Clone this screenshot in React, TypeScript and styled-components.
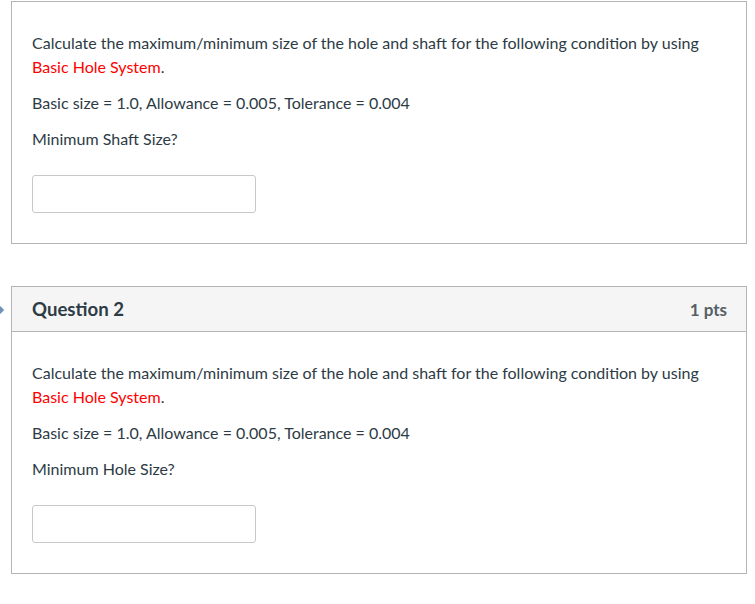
import React from "react";
import styled, { createGlobalStyle } from "styled-components";

const Global = createGlobalStyle`
  html, body { margin: 0; padding: 0; background: #fff; }
  body { font-family: Lato, "Noto Sans", "Liberation Sans", sans-serif; color: #2d3b45; }
`;

const Page = styled.div`
  position: relative;
  width: 755px;
  padding: 1px 0 0 11px;
  box-sizing: border-box;
  display: flex;
  flex-direction: column;
  gap: 42px;
`;

const Card = styled.section`
  position: relative;
  width: 736px;
  box-sizing: border-box;
  border: 1px solid #b5b5b5;
  background: #fff;
`;

const Header = styled.header`
  height: 44px;
  display: flex;
  align-items: center;
  justify-content: space-between;
  padding: 0 19px 0 20px;
  background: #f5f5f5;
  border-bottom: 1px solid #b5b5b5;
`;

const Title = styled.h2`
  margin: 0;
  font-size: 18.6px;
  font-weight: 700;
  color: #2d3b45;
`;

const Points = styled.span`
  font-size: 17px;
  font-weight: 700;
  color: #555f66;
`;

const Marker = styled.span`
  position: absolute;
  left: -15px;
  top: 20px;
  width: 6px;
  height: 6px;
  background: #6f94b8;
  transform: rotate(45deg);
  border-radius: 1px;
`;

const Body = styled.div`
  padding: 29px 20px 30px 20px;
  font-size: 16px;
  line-height: 24px;
  color: #2d3b45;
`;

const Para = styled.p`
  margin: 0 0 12px 0;
`;

const Red = styled.span`
  color: #ff0000;
`;

const Answer = styled.input`
  display: block;
  margin-top: 24px;
  width: 224px;
  height: 38px;
  box-sizing: border-box;
  border: 1px solid #c8c8c8;
  border-radius: 3px;
  background: #fff;
  outline: none;
`;

const QuestionBody: React.FC<{ ask: string }> = ({ ask }) => (
  <Body>
    <Para>
      Calculate the maximum/minimum size of the hole and shaft for the following condition by using <Red>Basic Hole System</Red>.
    </Para>
    <Para>Basic size = 1.0, Allowance = 0.005, Tolerance = 0.004</Para>
    <Para>{ask}</Para>
    <Answer type="text" aria-label={ask} />
  </Body>
);

export default function App() {
  return (
    <>
      <Global />
      <Page>
        <Card>
          <QuestionBody ask="Minimum Shaft Size?" />
        </Card>
        <Card>
          <Marker />
          <Header>
            <Title>Question 2</Title>
            <Points>1 pts</Points>
          </Header>
          <QuestionBody ask="Minimum Hole Size?" />
        </Card>
      </Page>
    </>
  );
}
